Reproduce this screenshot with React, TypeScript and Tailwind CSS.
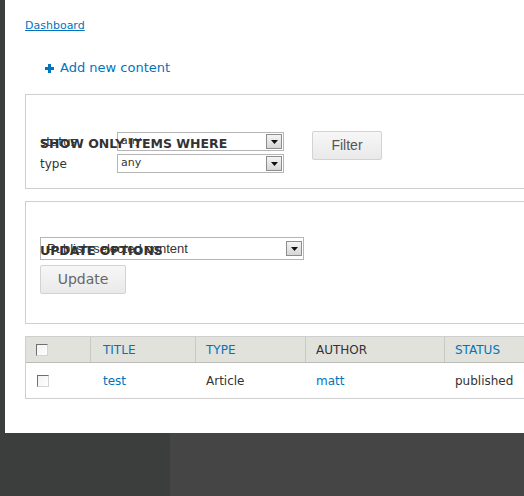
import React from "react";

const dv = "font-['DejaVu_Sans',Verdana,sans-serif]";
const lib = "font-['Liberation_Sans',Arial,sans-serif]";

function Arrow() {
    return (
        <span className="flex h-[15px] w-[16px] items-center justify-center border border-[#8d8d8d] bg-gradient-to-b from-[#f4f4f4] to-[#d6d6d6]">
            <svg width="7" height="4" viewBox="0 0 7 4">
                <path d="M0 0h7L3.5 4z" fill="#111" />
            </svg>
        </span>
    );
}

function FakeSelect({ text, className, textClass }: { text: string; className: string; textClass: string }) {
    return (
        <div className={`flex items-center justify-between border border-[#b5b5b5] bg-white pl-[3px] pr-[1px] ${className}`}>
            <span className={textClass}>{text}</span>
            <Arrow />
        </div>
    );
}

function Checkbox() {
    return (
        <span className="block h-[12px] w-[12px] border border-t-[#6f6f6f] border-l-[#6f6f6f] border-b-[#d4d4d4] border-r-[#d4d4d4] bg-gradient-to-br from-[#f2f2f2] to-white" />
    );
}

function Button({ label, className }: { label: string; className: string }) {
    return (
        <button className={`flex h-[29px] items-center justify-center rounded-[2px] border border-[#d2d2d2] bg-gradient-to-b from-[#f7f7f7] to-[#e9e9e9] ${className}`}>
            {label}
        </button>
    );
}

export default function App() {
    return (
        <div className={`relative h-[496px] w-[524px] overflow-hidden bg-[#3c3d3d] ${dv}`}>
            <div className="absolute bottom-0 left-[170px] right-0 h-[63px] bg-[#454545]" />
            <div className="ml-[5px] h-[433px] overflow-hidden bg-white pl-[20px] text-[#333]">
                <div className="pt-[19px] text-[11px] leading-[14px]">
                    <a className="text-[#0074bd] underline">Dashboard</a>
                </div>
                <div className="mt-[26px] flex items-center gap-[6px] pl-[20px] text-[13px] leading-[18px] text-[#0074bd]">
                    <svg width="9" height="9" viewBox="0 0 9 9">
                        <path d="M3 0h3v3h3v3H6v3H3V6H0V3h3z" fill="#0074bd" />
                    </svg>
                    <span>Add new content</span>
                </div>

                {/* filter fieldset */}
                <div className="relative mt-[17px] h-[95px] w-[560px] border border-[#cfcfcf]">
                    <div className="absolute left-[14px] top-[41px] z-10 text-[12.5px] font-bold leading-[16px] text-[#333]">
                        SHOW ONLY ITEMS WHERE
                    </div>
                    <div className="flex pl-[14px] pt-[37px]">
                        <div className="flex flex-col gap-[3px]">
                            <div className="flex h-[19px] items-center">
                                <span className="w-[77px] text-[12px] text-[#333]">status</span>
                                <FakeSelect text="any" className="h-[19px] w-[167px]" textClass="text-[11px] text-[#333]" />
                            </div>
                            <div className="flex h-[19px] items-center">
                                <span className="w-[77px] text-[12px] text-[#333]">type</span>
                                <FakeSelect text="any" className="h-[19px] w-[167px]" textClass="text-[11px] text-[#333]" />
                            </div>
                        </div>
                        <Button label="Filter" className={`-mt-[1px] ml-[28px] w-[70px] text-[14px] text-[#555] ${lib}`} />
                    </div>
                </div>

                {/* update fieldset */}
                <div className="relative mt-[12px] h-[123px] w-[560px] border border-[#cfcfcf]">
                    <div className="absolute left-[14px] top-[41px] z-10 text-[12.5px] font-bold leading-[16px] text-[#333]">
                        UPDATE OPTIONS
                    </div>
                    <div className="flex flex-col gap-[5px] pl-[14px] pt-[35px]">
                        <FakeSelect
                            text="Publish selected content"
                            className="h-[23px] w-[264px] pl-[6px]"
                            textClass={`text-[13px] text-[#333] ${lib}`}
                        />
                        <Button label="Update" className="w-[86px] text-[14px] text-[#666]" />
                    </div>
                </div>

                {/* content table */}
                <div className="mt-[12px] w-[560px] border border-[#cfcfcf]">
                    <div className="flex h-[26px] items-center border-b border-[#bcbcb6] bg-[#e1e2dc] text-[12px]">
                        <div className="flex h-full w-[65px] items-center border-r border-[#c9c9c3] pl-[10px]">
                            <Checkbox />
                        </div>
                        <div className="flex h-full w-[105px] items-center border-r border-[#c9c9c3] pl-[12px] text-[#0074bd]">TITLE</div>
                        <div className="flex h-full w-[110px] items-center border-r border-[#c9c9c3] pl-[10px] text-[#0074bd]">TYPE</div>
                        <div className="flex h-full w-[139px] items-center border-r border-[#c9c9c3] pl-[10px] text-[#333]">AUTHOR</div>
                        <div className="flex h-full items-center pl-[10px] text-[#0074bd]">STATUS</div>
                    </div>
                    <div className="flex h-[35px] items-center text-[12px]">
                        <div className="w-[65px] pl-[11px]">
                            <Checkbox />
                        </div>
                        <div className="w-[105px] pl-[12px] text-[#0074bd]">test</div>
                        <div className="w-[110px] pl-[10px] text-[#333]">Article</div>
                        <div className="w-[139px] pl-[10px] text-[#0074bd]">matt</div>
                        <div className="pl-[10px] text-[#333]">published</div>
                    </div>
                </div>
            </div>
        </div>
    );
}
